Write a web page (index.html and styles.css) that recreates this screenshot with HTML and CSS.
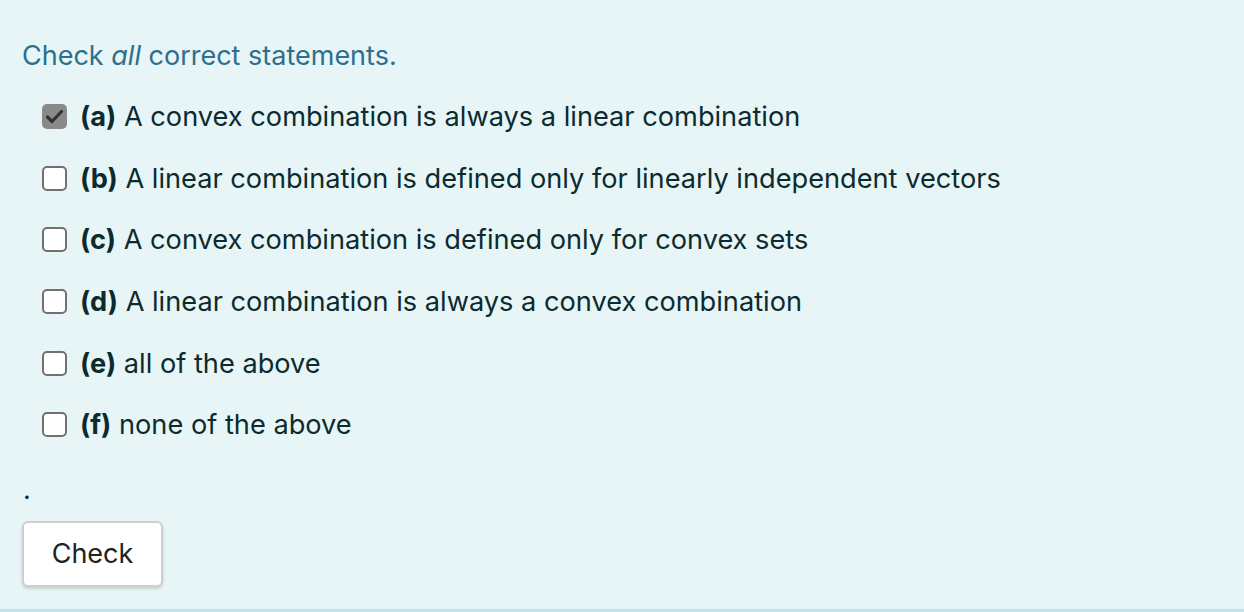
FILE: index.html
```
<!DOCTYPE html>
<html lang="en">
<head>
    <meta charset="UTF-8">
    <title>Quiz</title>
    <link rel="stylesheet" href="styles.css">
</head>
<body>
    <div class="question">
        <p class="prompt">Check <em>all</em> correct statements.</p>

        <ul class="choices">
            <li>
                <span class="box checked">
                    <svg viewBox="0 0 21 21" width="21" height="21"><path d="M3.5 11l4.5 4.5 9.5-10" fill="none" stroke="#333" stroke-width="3.2" stroke-linecap="round" stroke-linejoin="round"/></svg>
                </span>
                <span class="label"><b>(a)</b> A convex combination is always a linear combination</span>
            </li>
            <li>
                <span class="box"></span>
                <span class="label"><b>(b)</b> A linear combination is defined only for linearly independent vectors</span>
            </li>
            <li>
                <span class="box"></span>
                <span class="label"><b>(c)</b> A convex combination is defined only for convex sets</span>
            </li>
            <li>
                <span class="box"></span>
                <span class="label"><b>(d)</b> A linear combination is always a convex combination</span>
            </li>
            <li>
                <span class="box"></span>
                <span class="label"><b>(e)</b> all of the above</span>
            </li>
            <li>
                <span class="box"></span>
                <span class="label"><b>(f)</b> none of the above</span>
            </li>
        </ul>

        <p class="dot">.</p>

        <button class="check">Check</button>
    </div>
</body>
</html>
```

FILE: styles.css
```
html, body {
    margin: 0;
    height: 100%;
}

body {
    background-color: #e7f5f7;
    font-family: Inter, "Noto Sans", sans-serif;
    color: #0c2b2e;
}

.question {
    box-sizing: border-box;
    height: 612px;
    padding: 38px 22px 0;
    border-bottom: 3px solid #bfe3ea;
}

.prompt {
    margin: 0;
    font-size: 27px;
    line-height: 36px;
    color: #2d6f8c;
}

.choices {
    list-style: none;
    margin: 12px 0 0;
    padding: 0 0 0 20px;
}

.choices li {
    display: flex;
    align-items: center;
    gap: 13px;
    height: 61.6px;
    font-size: 27.2px;
}

.choices b {
    font-weight: 700;
}

.box {
    box-sizing: border-box;
    width: 25px;
    height: 25px;
    border: 2px solid #707070;
    border-radius: 5px;
    background-color: #fff;
    display: flex;
    align-items: center;
    justify-content: center;
}

.box.checked {
    background-color: #8a8a8a;
    border-color: #8a8a8a;
}

.dot {
    margin: 16px 0 0 1px;
    font-size: 27px;
    line-height: 36px;
}

.check {
    margin-top: 13px;
    width: 141px;
    height: 66px;
    background: #fff;
    border: 2px solid #cfcfcf;
    border-radius: 6px;
    box-shadow: 0 2px 3px rgba(0, 0, 0, 0.15);
    font-family: Inter, "Noto Sans", sans-serif;
    font-size: 27px;
    color: #222;
}
```
